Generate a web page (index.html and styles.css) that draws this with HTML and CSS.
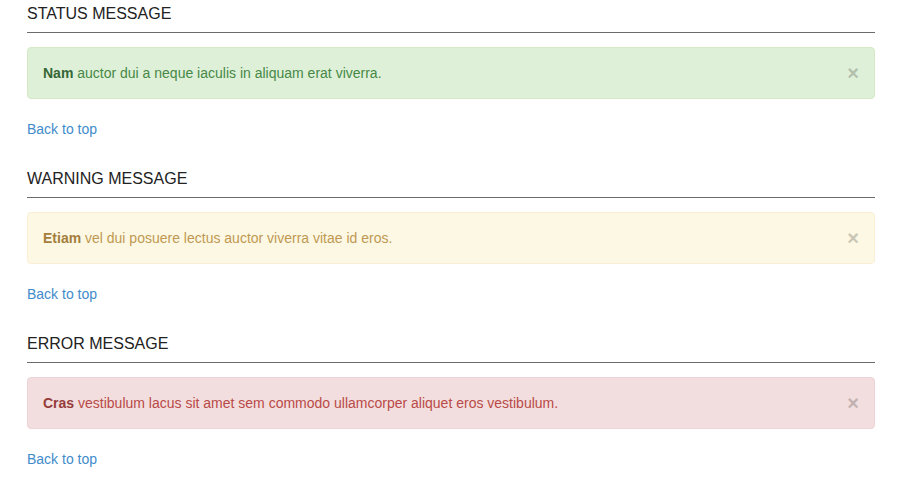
FILE: index.html
```html
<!DOCTYPE html>
<html lang="en">
<head>
  <meta charset="UTF-8">
  <title>Messages</title>
  <link rel="stylesheet" href="styles.css">
</head>
<body>
  <div class="page" id="top">

    <section class="message-block">
      <h2 class="block-title">Status message</h2>
      <div class="alert alert-success">
        <p><strong>Nam</strong> auctor dui a neque iaculis in aliquam erat viverra.</p>
        <button class="close" type="button">&times;</button>
      </div>
      <a class="back-top" href="#top">Back to top</a>
    </section>

    <section class="message-block">
      <h2 class="block-title">Warning message</h2>
      <div class="alert alert-warning">
        <p><strong>Etiam</strong> vel dui posuere lectus auctor viverra vitae id eros.</p>
        <button class="close" type="button">&times;</button>
      </div>
      <a class="back-top" href="#top">Back to top</a>
    </section>

    <section class="message-block">
      <h2 class="block-title">Error message</h2>
      <div class="alert alert-danger">
        <p><strong>Cras</strong> vestibulum lacus sit amet sem commodo ullamcorper aliquet eros vestibulum.</p>
        <button class="close" type="button">&times;</button>
      </div>
      <a class="back-top" href="#top">Back to top</a>
    </section>

  </div>
</body>
</html>
```

FILE: styles.css
```css
body {
  margin: 0;
  font-family: "Liberation Sans", Arial, sans-serif;
  font-size: 14px;
  line-height: 20px;
  color: #333;
  background: #fff;
}

.page {
  padding: 4px 36px 0 27px;
}

.message-block {
  display: flex;
  flex-direction: column;
  align-items: flex-start;
  margin-bottom: 30px;
}

.block-title {
  align-self: stretch;
  margin: 0 0 14px;
  padding-bottom: 8px;
  border-bottom: 1px solid #6b6b6b;
  font-size: 16px;
  font-weight: normal;
  line-height: 20px;
  text-transform: uppercase;
  color: #222;
}

.alert {
  align-self: stretch;
  display: flex;
  align-items: center;
  padding: 15px;
  margin-bottom: 20px;
  border: 1px solid transparent;
  border-radius: 4px;
}

.alert p {
  flex: 1;
  margin: 0;
}

.alert-success {
  background-color: #dff0d8;
  border-color: #d6e9c6;
  color: #468847;
}
.alert-success strong {
  color: #356635;
}

.alert-warning {
  background-color: #fcf8e3;
  border-color: #fbeed5;
  color: #c09853;
}
.alert-warning strong {
  color: #a47e3c;
}

.alert-danger {
  background-color: #f2dede;
  border-color: #eed3d7;
  color: #b94a48;
}
.alert-danger strong {
  color: #953b39;
}

.close {
  padding: 0;
  margin: 0;
  height: 20px;
  background: none;
  border: 0;
  font-family: "Liberation Sans", Arial, sans-serif;
  font-size: 20px;
  font-weight: bold;
  line-height: 20px;
  color: #000;
  opacity: 0.2;
  cursor: pointer;
}

.back-top {
  color: #428bca;
  text-decoration: none;
}
```
